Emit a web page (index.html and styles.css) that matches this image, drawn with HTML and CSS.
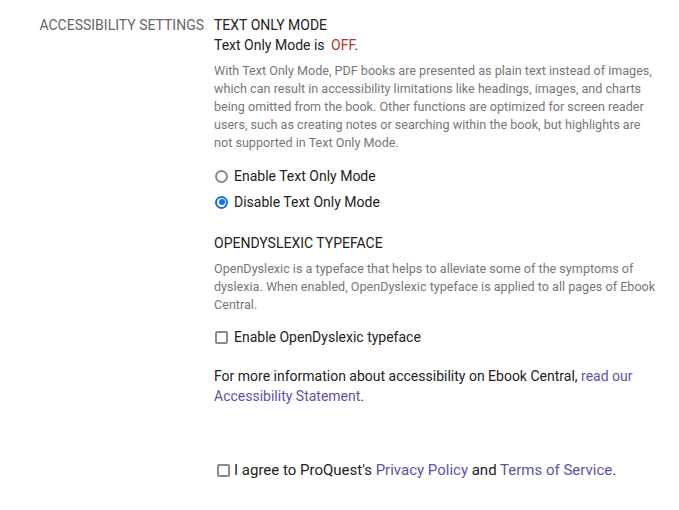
FILE: index.html
```html
<!DOCTYPE html>
<html>
<head>
<meta charset="utf-8">
<link rel="stylesheet" href="styles.css">
</head>
<body>
<div class="page">
  <div class="settings">
    <div class="label">ACCESSIBILITY SETTINGS</div>
    <div class="content">
      <h2 class="heading">TEXT ONLY MODE</h2>
      <p class="status">Text Only Mode is <span class="off">OFF</span>.</p>
      <p class="desc">With Text Only Mode, PDF books are presented as plain text instead of images, which can result in accessibility limitations like headings, images, and charts being omitted from the book. Other functions are optimized for screen reader users, such as creating notes or searching within the book, but highlights are not supported in Text Only Mode.</p>
      <div class="options">
        <label class="option"><span class="radio"></span>Enable Text Only Mode</label>
        <label class="option"><span class="radio checked"></span>Disable Text Only Mode</label>
      </div>
      <h2 class="heading second">OPENDYSLEXIC TYPEFACE</h2>
      <p class="desc">OpenDyslexic is a typeface that helps to alleviate some of the symptoms of dyslexia. When enabled, OpenDyslexic typeface is applied to all pages of Ebook Central.</p>
      <label class="option check"><span class="box"></span>Enable OpenDyslexic typeface</label>
      <p class="info">For more information about accessibility on Ebook Central, <a href="#">read our Accessibility Statement</a>.</p>
    </div>
  </div>
  <div class="agree"><span class="box"></span><span class="agree-text">I agree to ProQuest's <a href="#">Privacy Policy</a> and <a href="#">Terms of Service</a>.</span></div>
</div>
</body>
</html>
```
FILE: styles.css
```css
html, body {
  margin: 0;
  padding: 0;
  background: #fff;
}
body {
  font-family: Roboto, "Liberation Sans", sans-serif;
  color: #222;
}
.page {
  padding: 16px 0 0 0;
}
.settings {
  display: grid;
  grid-template-columns: 204px 444px;
  column-gap: 10px;
}
.label {
  text-align: right;
  font-size: 14px;
  color: #666;
  line-height: 18px;
}
.content {
  display: flex;
  flex-direction: column;
}
.heading {
  margin: 0;
  font-size: 14px;
  font-weight: 400;
  line-height: 18px;
  color: #222;
}
.heading.second {
  margin-top: 23px;
}
.status {
  margin: 2px 0 0;
  font-size: 14px;
  line-height: 18px;
  color: #222;
}
.off {
  color: #c0302a;
  margin-left: 3px;
}
.desc {
  margin: 8px 0 0;
  font-size: 12.6px;
  line-height: 18px;
  color: #777;
}
.heading.second + .desc {
  margin-top: 8px;
}
.options {
  display: flex;
  flex-direction: column;
  gap: 8px;
  margin-top: 15px;
}
.option {
  display: flex;
  align-items: center;
  font-size: 14px;
  line-height: 18px;
  color: #222;
}
.radio {
  width: 9px;
  height: 9px;
  border: 2px solid #8a8a8a;
  border-radius: 50%;
  margin: 0 6px 0 1px;
  position: relative;
  box-sizing: content-box;
  flex: none;
}
.radio.checked {
  border-color: #1a6ee6;
}
.radio.checked::after {
  content: "";
  position: absolute;
  left: 1.5px;
  top: 1.5px;
  width: 6px;
  height: 6px;
  border-radius: 50%;
  background: #1a6ee6;
}
.box {
  width: 9px;
  height: 9px;
  border: 2px solid #8a8a8a;
  border-radius: 2px;
  margin: 0 6px 0 1px;
  flex: none;
  display: inline-block;
}
.check {
  margin-top: 14px;
}
.info {
  margin: 20px 0 0;
  font-size: 14px;
  line-height: 20px;
  color: #222;
}
a {
  color: #5a55a8;
  text-decoration: none;
}
.agree {
  margin: 54px 0 0 217px;
  display: flex;
  align-items: center;
  font-size: 15px;
  line-height: 20px;
  color: #222;
}
.agree .box {
  margin: 0 4px 0 0;
}
```
